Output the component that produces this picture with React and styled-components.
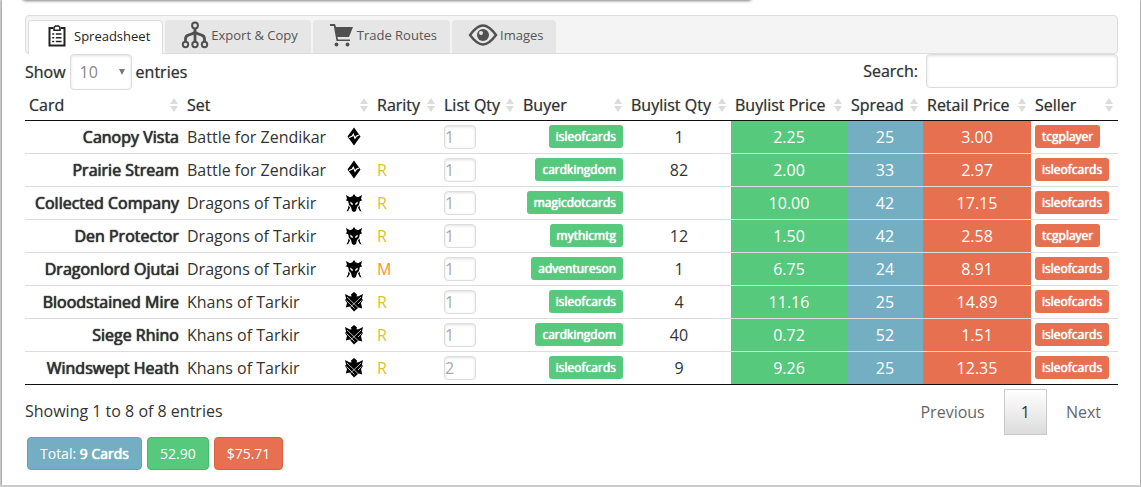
import React from 'react'
import styled, { createGlobalStyle } from 'styled-components'

const columns = [
    { title: 'Card', width: 158 },
    { title: 'Set', width: 190 },
    { title: 'Rarity', width: 67 },
    { title: 'List Qty', width: 79 },
    { title: 'Buyer', width: 108 },
    { title: 'Buylist Qty', width: 104 },
    { title: 'Buylist Price', width: 116 },
    { title: 'Spread', width: 76 },
    { title: 'Retail Price', width: 108 },
    { title: 'Seller', width: 87 },
]

const cards = [
    { name: 'Canopy Vista', set: 'Battle for Zendikar', rarity: '', qty: 1, buyer: 'isleofcards', buyQty: '1', buy: '2.25', spread: 25, retail: '3.00', seller: 'tcgplayer' },
    { name: 'Prairie Stream', set: 'Battle for Zendikar', rarity: 'R', qty: 1, buyer: 'cardkingdom', buyQty: '82', buy: '2.00', spread: 33, retail: '2.97', seller: 'isleofcards' },
    { name: 'Collected Company', set: 'Dragons of Tarkir', rarity: 'R', qty: 1, buyer: 'magicdotcards', buyQty: '', buy: '10.00', spread: 42, retail: '17.15', seller: 'isleofcards' },
    { name: 'Den Protector', set: 'Dragons of Tarkir', rarity: 'R', qty: 1, buyer: 'mythicmtg', buyQty: '12', buy: '1.50', spread: 42, retail: '2.58', seller: 'tcgplayer' },
    { name: 'Dragonlord Ojutai', set: 'Dragons of Tarkir', rarity: 'M', qty: 1, buyer: 'adventureson', buyQty: '1', buy: '6.75', spread: 24, retail: '8.91', seller: 'isleofcards' },
    { name: 'Bloodstained Mire', set: 'Khans of Tarkir', rarity: 'R', qty: 1, buyer: 'isleofcards', buyQty: '4', buy: '11.16', spread: 25, retail: '14.89', seller: 'isleofcards' },
    { name: 'Siege Rhino', set: 'Khans of Tarkir', rarity: 'R', qty: 1, buyer: 'cardkingdom', buyQty: '40', buy: '0.72', spread: 52, retail: '1.51', seller: 'isleofcards' },
    { name: 'Windswept Heath', set: 'Khans of Tarkir', rarity: 'R', qty: 2, buyer: 'isleofcards', buyQty: '9', buy: '9.26', spread: 25, retail: '12.35', seller: 'isleofcards' },
]

function ClipboardIcon() {
    return (
        <svg width="18" height="22" viewBox="0 0 18 22" fill="none" stroke="#222" strokeWidth="2">
            <path d="M5 3H1.500v17.500h15V3H13" />
            <path d="M6 5.200V2.500L7.500 1h3L12 2.500v2.700z" strokeWidth="1.600" />
            <path d="M4.200 9h2M4.200 12.800h2M4.200 16.600h2M7.800 9h5.700M7.800 12.800h5.700M7.800 16.600h5.700" strokeWidth="1.500" />
        </svg>
    )
}

function SitemapIcon() {
    return (
        <svg width="28" height="28" viewBox="0 0 28 28" fill="none" stroke="#505050">
            <circle cx="14" cy="4.500" r="2.900" strokeWidth="2" />
            <circle cx="4.500" cy="23.500" r="2.700" strokeWidth="2" />
            <circle cx="14" cy="23.500" r="2.700" strokeWidth="2" />
            <circle cx="23.500" cy="23.500" r="2.700" strokeWidth="2" />
            <path d="M14 7.500v13M4.500 20.500v-2.500q0-3.500 3.500-4.200 3.500-.6 6-2.800 2.500 2.200 6 2.800 3.500.7 3.500 4.200v2.500" strokeWidth="2.800" />
        </svg>
    )
}

function CartIcon() {
    return (
        <svg width="26" height="24" viewBox="-1 0 26 24">
            <path d="M0 1h5l1 3h17l-4 10H7.500l.5 2.500h12V18H6.500L3.800 3H0z" fill="#505050" />
            <circle cx="6.500" cy="21.500" r="1.900" fill="#505050" />
            <circle cx="17.500" cy="21.500" r="1.900" fill="#505050" />
        </svg>
    )
}

function EyeIcon() {
    return (
        <svg width="30" height="24" viewBox="0 0 30 24">
            <path d="M2 12Q9 2.500 15 2.500T28 12q-7 9.500-13 9.500T2 12z" fill="none" stroke="#505050" strokeWidth="2.400" />
            <circle cx="15" cy="12" r="6" fill="#505050" />
            <circle cx="13" cy="10" r="2" fill="#e6e6e6" />
        </svg>
    )
}

function SetIcon({ set }) {
    if (set === 'Battle for Zendikar') {
        return (
            <svg width="20" height="20" viewBox="0 0 20 20">
                <path d="M10 0.500l6.500 9L10 18.500 3.500 9.500z" fill="#000" />
                <path d="M5 10.500l3-1.200 1.300-2 1.700 4 1.300-2 2.700-1.300" fill="none" stroke="#fff" strokeWidth="1.200" />
            </svg>
        )
    }
    if (set === 'Dragons of Tarkir') {
        return (
            <svg width="20" height="20" viewBox="0 0 20 20">
                <path d="M10 1l1.600 2.200L14 4.200 18 2l-1 4 1.300 1.200-2.500 1-.8 3.800-2 2-1 4-2 1-2-1-1-4-2-2-.8-3.800-2.500-1L3 6 2 2l4 2.200 2.400-1z" fill="#000" />
                <path d="M4.500 12.500l1.500 2-1.800 3.500-1.700.5 1.500-3zM15.500 12.500l-1.500 2 1.800 3.500 1.700.5-1.500-3z" fill="#000" />
                <path d="M6 8.500l2.700 1.700v2L6.700 11zM14 8.500l-2.700 1.700v2l2-1.200z" fill="#fff" />
            </svg>
        )
    }
    return (
        <svg width="20" height="20" viewBox="0 0 20 20">
            <path d="M10 0l3 2.500-.5 2 2-.3L19 2l-1.200 5 1.200.7-2 3.300 1.200 5.500-3.700-1L10 19.500l-4.500-5-3.700 1L3 11 1 7.700 2.200 7 1 2l4.500 2.200 2 .3-.5-2z" fill="#000" />
            <path d="M3 5l11.500 11M2.500 8.500l8 8M17 5L5.500 16M17.500 8.500l-3.500 3.500" stroke="#fff" strokeWidth=".7" />
        </svg>
    )
}

function SortIcon() {
    return (
        <svg width="8" height="14" viewBox="0 0 8 14" fill="#dcdcdc">
            <path d="M4 0l4 6H0zM0 8h8l-4 6z" />
        </svg>
    )
}

export default function App() {
    return (
        <>
            <GlobalStyle />
            <PanelAbove />
            <Panel>
                <Tabs>
                    <Tab $active><ClipboardIcon />Spreadsheet</Tab>
                    <Tab><SitemapIcon />Export &amp; Copy</Tab>
                    <Tab><CartIcon />Trade Routes</Tab>
                    <Tab><EyeIcon />Images</Tab>
                </Tabs>
                <Controls>
                    <Label>
                        Show
                        <SelectBox>
                            <Select defaultValue="10">
                                <option>10</option>
                                <option>25</option>
                                <option>50</option>
                            </Select>
                            <Arrow width="6" height="6" viewBox="0 0 6 6"><path d="M0 0h6L3 6z" fill="#777" /></Arrow>
                        </SelectBox>
                        entries
                    </Label>
                    <Label $gap={8}>
                        Search:
                        <Search type="search" />
                    </Label>
                </Controls>
                <Table>
                    <colgroup>
                        {columns.map((c) => <Col key={c.title} $width={c.width} />)}
                    </colgroup>
                    <thead>
                        <tr>
                            {columns.map((c) => (
                                <Th key={c.title}><Heading>{c.title}<SortIcon /></Heading></Th>
                            ))}
                        </tr>
                    </thead>
                    <tbody>
                        {cards.map((card) => (
                            <Row key={card.name}>
                                <Td $align="right"><Name>{card.name}</Name></Td>
                                <Td><SetCell>{card.set}<SetIcon set={card.set} /></SetCell></Td>
                                <Td><Rarity $mythic={card.rarity === 'M'}>{card.rarity}</Rarity></Td>
                                <Td><Qty type="text" aria-label={`List quantity of ${card.name}`} defaultValue={card.qty} /></Td>
                                <Td $align="right"><Badge $color="#56c97d">{card.buyer}</Badge></Td>
                                <Td $align="center">{card.buyQty}</Td>
                                <Td $align="center" $fill="#56c97d">{card.buy}</Td>
                                <Td $align="center" $fill="#74aec3">{card.spread}</Td>
                                <Td $align="center" $fill="#e67050">{card.retail}</Td>
                                <Td><Badge $color="#e67050">{card.seller}</Badge></Td>
                            </Row>
                        ))}
                    </tbody>
                </Table>
                <Footer>
                    <Info>Showing 1 to 8 of 8 entries</Info>
                    <Pager>
                        <PageButton>Previous</PageButton>
                        <PageButton $current>1</PageButton>
                        <PageButton>Next</PageButton>
                    </Pager>
                </Footer>
                <Totals>
                    <Total $color="#74aec3" $border="#5fa2ba">Total: <Name>9 Cards</Name></Total>
                    <Total $color="#56c97d" $border="#43bb6c">52.90</Total>
                    <Total $color="#e67050" $border="#dd5f3d">$75.71</Total>
                </Totals>
            </Panel>
        </>
    )
}

const GlobalStyle = createGlobalStyle`
    * {
        box-sizing: border-box;
    }
    body {
        margin: 0;
        background: #ccc;
        color: #333;
        font: 16px/24px "Open Sans", sans-serif;
    }
    button, input, select {
        font: inherit;
    }
    svg {
        flex: none;
    }
`

const PanelAbove = styled.div`
    position: absolute;
    top: -10px;
    left: 22px;
    width: 64%;
    height: 10px;
    border-radius: 4px;
    box-shadow: 0 1px 3px rgba(0, 0, 0, 0.5);
`

const Panel = styled.main`
    margin: 0 1px 0 2px;
    padding: 15px 22px 13px 23px;
    background: #fff;
    box-shadow: 0 1px 2px rgba(0, 0, 0, 0.4);
`

const Tabs = styled.nav`
    display: flex;
    align-items: flex-end;
    gap: 2px;
    height: 39px;
    padding-left: 2px;
    background: #f4f4f4;
    border: 1px solid #ddd;
    border-radius: 4px;
`

const Tab = styled.button`
    display: flex;
    align-items: center;
    gap: ${(p) => (p.$active ? '8px' : '2px')};
    height: ${(p) => (p.$active ? '34px' : '33px')};
    margin-bottom: ${(p) => (p.$active ? '-1px' : '0')};
    padding: 0 12px 4px ${(p) => (p.$active ? '19px' : '15px')};
    border: 1px solid ${(p) => (p.$active ? '#ddd' : '#e6e6e6')};
    border-bottom: 0;
    border-radius: 4px 4px 0 0;
    background: ${(p) => (p.$active ? '#fff' : '#e6e6e6')};
    color: ${(p) => (p.$active ? '#222' : '#555')};
    font-size: 13px;
    white-space: nowrap;
`

const Controls = styled.div`
    display: flex;
    justify-content: space-between;
    align-items: flex-start;
`

const Label = styled.label`
    display: flex;
    align-items: center;
    gap: ${(p) => p.$gap || 4}px;
    text-shadow: 0 0 1px rgba(51, 51, 51, 0.6);
`

const SelectBox = styled.span`
    position: relative;
`

const Select = styled.select`
    display: block;
    appearance: none;
    width: 62px;
    height: 36px;
    padding: 0 9px;
    border: 1px solid #ddd;
    border-radius: 4px;
    background: #fff;
    box-shadow: inset 0 1px 3px rgba(0, 0, 0, 0.12);
    color: #888;
`

const Arrow = styled.svg`
    position: absolute;
    top: 15px;
    right: 7px;
    pointer-events: none;
`

const Search = styled.input`
    width: 192px;
    height: 34px;
    border: 1px solid #ddd;
    border-radius: 4px;
    box-shadow: inset 0 1px 3px rgba(0, 0, 0, 0.12);
`

const Table = styled.table`
    width: 100%;
    table-layout: fixed;
    border-collapse: separate;
    border-spacing: 0;
    border-bottom: 1px solid #111;
`

const Col = styled.col`
    width: ${(p) => p.$width}px;
`

const Th = styled.th`
    height: 31px;
    padding: 0 5px 0 4px;
    border-bottom: 1px solid #111;
    font-weight: 400;
    text-align: left;
    text-shadow: 0 0 1px rgba(51, 51, 51, 0.6);
    white-space: nowrap;
`

const Heading = styled.div`
    display: flex;
    justify-content: space-between;
    align-items: center;
`

const Td = styled.td`
    height: 33px;
    padding: 0 4px;
    border-top: 1px solid #ddd;
    background: ${(p) => p.$fill || '#fff'};
    color: ${(p) => (p.$fill ? '#fff' : '#333')};
    text-align: ${(p) => p.$align || 'left'};
    white-space: nowrap;
`

const Row = styled.tr`
    &:first-child ${Td} {
        height: 32px;
        border-top: 0;
    }
`

const Name = styled.strong`
    font-weight: 400;
    text-shadow: 0 0 1px currentColor, 0 0 1px currentColor;
`

const SetCell = styled.div`
    display: flex;
    justify-content: space-between;
    align-items: center;
    padding-right: 5px;
`

const Rarity = styled.span`
    color: ${(p) => (p.$mythic ? '#ff9326' : '#d6c52c')};
`

const Qty = styled.input`
    display: block;
    width: 32px;
    height: 24px;
    padding: 0;
    border: 1px solid #ddd;
    border-radius: 4px;
    box-shadow: inset 0 1px 3px rgba(0, 0, 0, 0.12);
    color: #aaa;
`

const Badge = styled.span`
    display: inline-block;
    height: 23px;
    padding: 0 7px;
    border-radius: 3px;
    background: ${(p) => p.$color};
    color: #fff;
    font-size: 12px;
    line-height: 23px;
    text-shadow: 0 0 1px #fff, 0 0 1px #fff;
    vertical-align: top;
`

const Footer = styled.div`
    display: flex;
    justify-content: space-between;
    align-items: center;
    padding-top: 4px;
`

const Info = styled.div`
    padding-bottom: 2px;
`

const Pager = styled.div`
    display: flex;
    gap: 2px;
`

const PageButton = styled.button`
    height: 46px;
    padding: 0 16px;
    border: 1px solid ${(p) => (p.$current ? '#cacaca' : 'transparent')};
    background: ${(p) => (p.$current ? 'linear-gradient(#fff, #dcdcdc)' : 'none')};
    color: ${(p) => (p.$current ? '#333' : '#666')};
`

const Totals = styled.div`
    display: flex;
    gap: 5px;
    padding: 2px;
`

const Total = styled.button`
    height: 33px;
    padding: 0 12px;
    border: 1px solid ${(p) => p.$border};
    border-radius: 4px;
    background: ${(p) => p.$color};
    color: #fff;
    font-size: 14px;
`
